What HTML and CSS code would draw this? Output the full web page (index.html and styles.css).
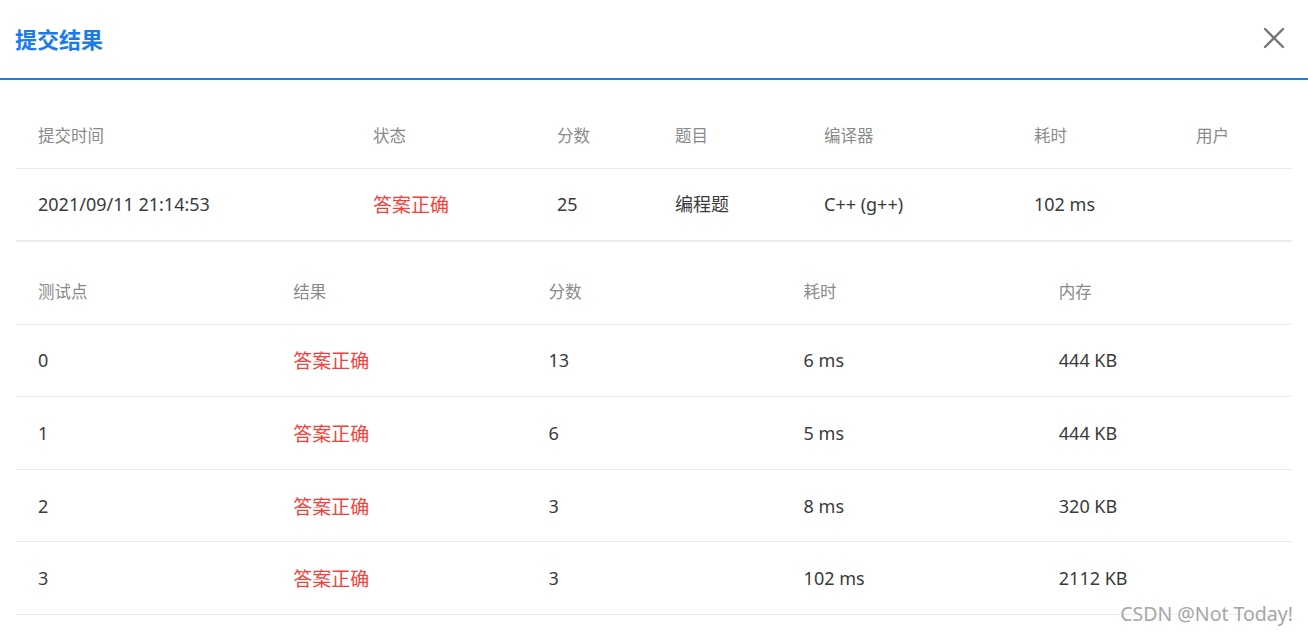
FILE: index.html
```html
<!DOCTYPE html>
<html lang="zh-CN">
<head>
<meta charset="utf-8">
<title>提交结果</title>
<link rel="stylesheet" href="styles.css">
</head>
<body>
<div class="dialog">
  <header class="dialog-header">
    <h1 class="dialog-title">提交结果</h1>
    <button class="close-btn" aria-label="关闭">
      <svg width="22" height="22" viewBox="0 0 22 22"><path d="M2 2 L20 20 M20 2 L2 20" stroke="#777" stroke-width="2.4" stroke-linecap="round" fill="none"/></svg>
    </button>
  </header>
  <main class="dialog-body">
    <div class="table summary">
      <div class="row head">
        <div class="cell">提交时间</div><div class="cell">状态</div><div class="cell">分数</div><div class="cell">题目</div><div class="cell">编译器</div><div class="cell">耗时</div><div class="cell">用户</div>
      </div>
      <div class="row data last-summary">
        <div class="cell">2021/09/11 21:14:53</div><div class="cell ok">答案正确</div><div class="cell">25</div><div class="cell">编程题</div><div class="cell">C++ (g++)</div><div class="cell">102 ms</div><div class="cell"></div>
      </div>
    </div>
    <div class="table cases">
      <div class="row head">
        <div class="cell">测试点</div><div class="cell">结果</div><div class="cell">分数</div><div class="cell">耗时</div><div class="cell">内存</div>
      </div>
      <div class="row data">
        <div class="cell">0</div><div class="cell ok">答案正确</div><div class="cell">13</div><div class="cell">6 ms</div><div class="cell">444 KB</div>
      </div>
      <div class="row data">
        <div class="cell">1</div><div class="cell ok">答案正确</div><div class="cell">6</div><div class="cell">5 ms</div><div class="cell">444 KB</div>
      </div>
      <div class="row data">
        <div class="cell">2</div><div class="cell ok">答案正确</div><div class="cell">3</div><div class="cell">8 ms</div><div class="cell">320 KB</div>
      </div>
      <div class="row data">
        <div class="cell">3</div><div class="cell ok">答案正确</div><div class="cell">3</div><div class="cell">102 ms</div><div class="cell">2112 KB</div>
      </div>
    </div>
  </main>
  <div class="watermark">CSDN @Not Today!</div>
</div>
</body>
</html>
```
FILE: styles.css
```css
* { box-sizing: border-box; }
html, body { margin: 0; padding: 0; background: #fff; }
body {
  font-family: "Noto Sans", "Noto Sans CJK SC", sans-serif;
  color: #333;
}
.dialog { position: relative; width: 1308px; height: 637px; overflow: hidden; }
.dialog-header {
  height: 80px;
  border-bottom: 2px solid #1a7ce8;
  display: flex;
  align-items: center;
  justify-content: space-between;
  padding: 0 23px 2px 15px;
}
.dialog-title {
  margin: 0;
  font-size: 22px;
  font-weight: 700;
  color: #1a7ce8;
  font-family: "Noto Sans CJK SC", sans-serif;
  line-height: 30px;
}
.close-btn {
  border: 0; background: none; padding: 0; margin: 0;
  width: 22px; height: 22px; display: flex;
}
.dialog-body { padding: 21px 16px 0; }
.table { display: flex; flex-direction: column; }
.row { display: grid; }
.summary .row { grid-template-columns: 335px 184px 118px 149px 210px 162px 1fr; }
.cases .row { grid-template-columns: repeat(5, 1fr); }
.cell { padding-left: 22px; line-height: 24px; white-space: nowrap; }
.row.head {
  align-items: end;
  border-bottom: 1px solid #ebebeb;
  font-size: 16.5px;
  color: #8a8a8a;
  padding-bottom: 21px;
  font-family: "Noto Sans CJK SC", sans-serif;
}
.summary .row.head { height: 68px; }
.cases .row.head { height: 83px; }
.row.data {
  align-items: center;
  height: 72.6px;
  border-bottom: 1px solid #ebebeb;
  font-size: 18px;
  color: #3a3a3a;
}
.row.data.last-summary { border-bottom: 2px solid #ececec; }
.cell.ok { color: #f5413b; font-size: 19px; font-family: "Noto Sans CJK SC", sans-serif; }
.watermark {
  position: absolute;
  right: 15px;
  top: 601px;
  font-size: 19.5px;
  line-height: 26px;
  color: #a6a6a6;
  text-shadow: 0 0 2px #fff, 0 0 2px #fff;
  font-family: "Noto Sans", sans-serif;
}
```
